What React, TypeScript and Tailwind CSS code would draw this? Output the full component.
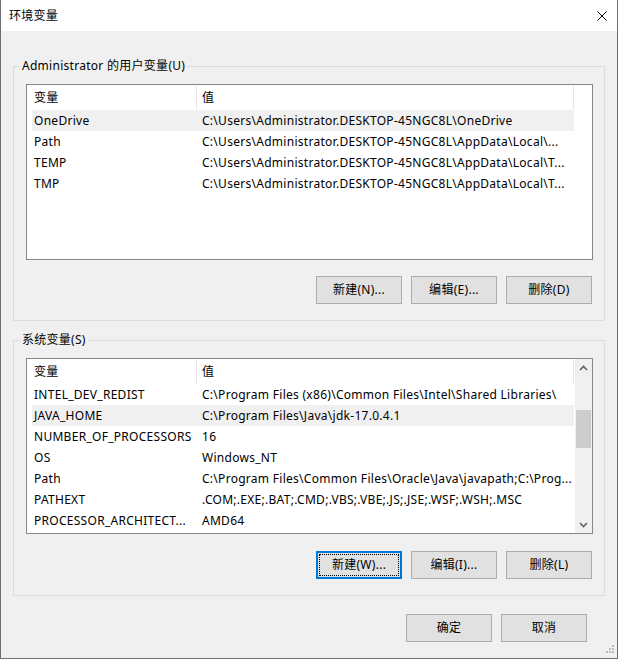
import React from 'react';

type EnvVar = { name: string; value: string };

const userVars: EnvVar[] = [
  { name: 'OneDrive', value: 'C:\\Users\\Administrator.DESKTOP-45NGC8L\\OneDrive' },
  { name: 'Path', value: 'C:\\Users\\Administrator.DESKTOP-45NGC8L\\AppData\\Local\\...' },
  { name: 'TEMP', value: 'C:\\Users\\Administrator.DESKTOP-45NGC8L\\AppData\\Local\\T...' },
  { name: 'TMP', value: 'C:\\Users\\Administrator.DESKTOP-45NGC8L\\AppData\\Local\\T...' },
];

const systemVars: EnvVar[] = [
  { name: 'INTEL_DEV_REDIST', value: 'C:\\Program Files (x86)\\Common Files\\Intel\\Shared Libraries\\' },
  { name: 'JAVA_HOME', value: 'C:\\Program Files\\Java\\jdk-17.0.4.1' },
  { name: 'NUMBER_OF_PROCESSORS', value: '16' },
  { name: 'OS', value: 'Windows_NT' },
  { name: 'Path', value: 'C:\\Program Files\\Common Files\\Oracle\\Java\\javapath;C:\\Prog...' },
  { name: 'PATHEXT', value: '.COM;.EXE;.BAT;.CMD;.VBS;.VBE;.JS;.JSE;.WSF;.WSH;.MSC' },
  { name: 'PROCESSOR_ARCHITECT...', value: 'AMD64' },
];

function Chevron({ up }: { up?: boolean }) {
  return (
    <svg width="9" height="6" viewBox="0 0 9 6">
      <path
        d={up ? 'M1 5 L4.5 1.5 L8 5' : 'M1 1 L4.5 4.5 L8 1'}
        fill="none"
        stroke="#606060"
        strokeWidth="1.6"
      />
    </svg>
  );
}

function ScrollBar() {
  return (
    <div className="w-[17px] flex flex-col bg-[#f0f0f0]">
      <div className="h-[17px] flex items-center justify-center">
        <Chevron up />
      </div>
      <div className="flex-1 px-[1px]">
        <div className="mt-[34px] h-[38px] bg-[#cdcdcd]" />
      </div>
      <div className="h-[17px] flex items-center justify-center">
        <Chevron />
      </div>
    </div>
  );
}

function VarList({ rows, selected, scroll }: { rows: EnvVar[]; selected: number; scroll?: boolean }) {
  return (
    <div className="h-[176px] border border-[#828790] bg-white flex">
      <div className="flex-1 min-w-0 flex flex-col pl-[5px] pr-[1px]">
        <div className="h-[25px] flex shrink-0">
          <div className="w-[165px] pl-[2px] border-r border-[#e5e5e5] flex items-center my-[1px]">变量</div>
          <div className="flex-1 pl-[5px] border-r border-[#e5e5e5] flex items-center my-[1px]">值</div>
        </div>
        {rows.map((r, i) => (
          <div key={r.name} className={`h-[21px] flex items-center shrink-0 ${i === selected ? 'bg-[#f0f0f0]' : ''}`}>
            <div className="w-[165px] pl-[2px] whitespace-nowrap overflow-hidden">{r.name}</div>
            <div className="flex-1 pl-[5px] whitespace-nowrap overflow-hidden">{r.value}</div>
          </div>
        ))}
      </div>
      {scroll ? <ScrollBar /> : <div className="w-[17px]" />}
    </div>
  );
}

function Btn({ label, focused }: { label: string; focused?: boolean }) {
  if (focused) {
    return (
      <button className="w-[86px] h-[28px] border-2 border-[#0078d7] bg-[#e1e1e1] p-[1px] flex">
        <span className="flex-1 border border-dotted border-black flex items-center justify-center">{label}</span>
      </button>
    );
  }
  return (
    <button className="w-[86px] h-[28px] border border-[#adadad] bg-[#e1e1e1] flex items-center justify-center">
      {label}
    </button>
  );
}

function Group({ title, children, className = '' }: { title: string; children: React.ReactNode; className?: string }) {
  return (
    <fieldset className={`border border-[#dcdcdc] pt-[10px] ${className}`}>
      <legend className="ml-[6px] px-[2px] leading-[16px]">{title}</legend>
      <div className="pl-[12px] pr-[11px] pb-[16px]">{children}</div>
    </fieldset>
  );
}

export default function App() {
  return (
    <div className="relative w-[618px] h-[659px] flex flex-col border-x border-b border-[#6f6f6f] bg-[#f0f0f0] text-[12px] tracking-[0.28px] text-black font-['Noto_Sans','Noto_Sans_CJK_SC',sans-serif]">
      <div className="h-[31px] bg-white flex items-center justify-between pl-[8px] pr-[10px] shrink-0">
        <span className="leading-[16px]">环境变量</span>
        <svg width="10" height="10" viewBox="0 0 10 10">
          <path d="M0.5 0.5 L9.5 9.5 M9.5 0.5 L0.5 9.5" stroke="#000" strokeWidth="1" />
        </svg>
      </div>

      <div className="flex-1 flex flex-col px-[12px]">
        <Group title="Administrator 的用户变量(U)" className="mt-[27px]">
          <VarList rows={userVars} selected={0} />
          <div className="mt-[16px] mr-[1px] flex justify-end gap-[9px]">
            <Btn label="新建(N)..." />
            <Btn label="编辑(E)..." />
            <Btn label="删除(D)" />
          </div>
        </Group>

        <Group title="系统变量(S)" className="mt-[11px]">
          <VarList rows={systemVars} selected={1} scroll />
          <div className="mt-[17px] mr-[1px] flex justify-end gap-[9px]">
            <Btn label="新建(W)..." focused />
            <Btn label="编辑(I)..." />
            <Btn label="删除(L)" />
          </div>
        </Group>

        <div className="mt-[18px] flex justify-end gap-[9px] pr-[18px]">
          <Btn label="确定" />
          <Btn label="取消" />
        </div>
      </div>

      {/* size grip */}
      <svg className="absolute right-[2px] bottom-[2px]" width="12" height="12" viewBox="0 0 12 12">
        <g fill="#bcbcbc">
          <rect x="9" y="1" width="2" height="2" />
          <rect x="6" y="4" width="2" height="2" />
          <rect x="9" y="4" width="2" height="2" />
          <rect x="3" y="7" width="2" height="2" />
          <rect x="6" y="7" width="2" height="2" />
          <rect x="9" y="7" width="2" height="2" />
        </g>
      </svg>
    </div>
  );
}
